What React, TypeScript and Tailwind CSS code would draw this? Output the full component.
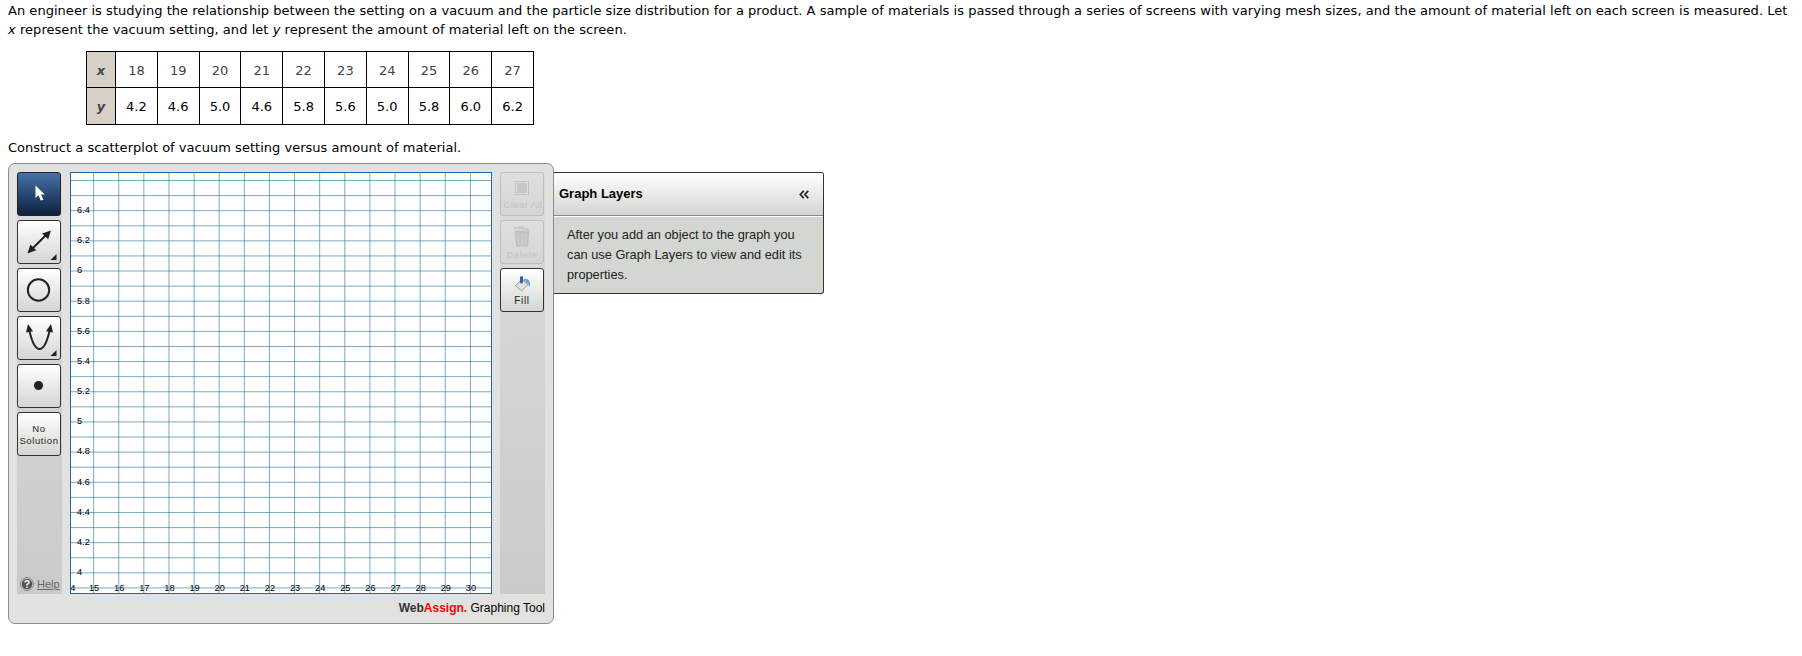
import type { ReactNode } from 'react';

const data = [
  [18, '4.2'], [19, '4.6'], [20, '5.0'], [21, '4.6'], [22, '5.8'],
  [23, '5.6'], [24, '5.0'], [25, '5.8'], [26, '6.0'], [27, '6.2'],
];

function Tool({ children, active, disabled }: { children: ReactNode; active?: boolean; disabled?: boolean }) {
  const look = active
    ? 'border-[#222] bg-linear-to-b from-[#4673a8] to-[#0e2240]'
    : disabled
      ? 'border-[#bebebe] bg-linear-to-b from-[#dfdfdf] to-[#d6d6d5]'
      : 'border-[#333] bg-linear-to-b from-white to-[#d4d6d1]';
  return (
    <button className={`flex h-11 w-11 shrink-0 flex-col items-center overflow-hidden rounded-[3px] border ${look}`}>
      {children}
    </button>
  );
}

function Graph() {
  const xs = Array.from({ length: 16 }, (_, i) => i);
  const ys = Array.from({ length: 28 }, (_, i) => i);
  return (
    <svg width="422" height="422" viewBox="0 0 422 422" className="shrink-0 bg-white">
      <g stroke="#1f7399" strokeOpacity="0.6" strokeWidth="1">
        {xs.map((i) => <line key={i} x1={23.6 + i * 25.12} x2={23.6 + i * 25.12} y1="0" y2="422" />)}
        {ys.map((i) => <line key={i} y1={8.5 + i * 15.09} y2={8.5 + i * 15.09} x1="0" x2="422" />)}
      </g>
      <g fontFamily="Liberation Sans, sans-serif" fontSize="9.2" fill="#000">
        {Array.from({ length: 13 }, (_, i) => (
          <text key={i} x="7" y={41 + i * 30.18}>{String((64 - i * 2) / 10)}</text>
        ))}
        <text x="0.2" y="419">4</text>
        {Array.from({ length: 16 }, (_, i) => (
          <text key={i} x={24.1 + i * 25.12} y="419" textAnchor="middle">{15 + i}</text>
        ))}
      </g>
      <rect x="0.5" y="0.5" width="421" height="421" fill="none" stroke="#2463a0" />
    </svg>
  );
}

export default function App() {
  return (
    <div className="h-[656px] w-[1802px] overflow-hidden bg-white pt-px pl-2 font-['DejaVu_Sans',Verdana,sans-serif] text-[13px] leading-[19px] text-black">
      <p className="whitespace-nowrap">
        <span className="tracking-[0.033px]">An engineer is studying the relationship between the setting on a vacuum and the particle size distribution for a product. A sample of materials is passed through a series of screens with varying mesh sizes, and the amount of material left on each screen is measured. Let</span>
        <br />
        <span className="tracking-[0.048px]"><i>x</i> represent the vacuum setting, and let <i>y</i> represent the amount of material left on the screen.</span>
      </p>
      <table className="mt-3 ml-[78px] h-[74px] w-[448px] table-fixed border-collapse text-center">
        <tbody>
          <tr className="h-[36px] text-[#444]">
            <th className="w-[29px] border border-black bg-[#d6d0c7] p-0 pt-px italic">x</th>
            {data.map(([x]) => <td key={x} className="border border-black p-0 pt-px">{x}</td>)}
          </tr>
          <tr className="h-[37px]">
            <th className="border border-black bg-[#d6d0c7] p-0 text-[#444] italic">y</th>
            {data.map(([x, y]) => <td key={x} className="border border-black p-0">{y}</td>)}
          </tr>
        </tbody>
      </table>
      <p className="mt-[13px] tracking-[0.02px] whitespace-nowrap">Construct a scatterplot of vacuum setting versus amount of material.</p>

      <div className="mt-[6px] flex items-start font-['Liberation_Sans',Arial,sans-serif]">
        <div className="h-[461px] w-[546px] rounded-[7px] border border-[#8c8c8c] bg-[#e1e1df] px-2 pt-2">
          <div className="flex h-[422px] gap-2">
            <div className="flex w-[45px] flex-col gap-1 bg-linear-to-b from-[#dcdcdc] to-[#cacaca]">
              <Tool active>
                <svg width="42" height="42" viewBox="0 0 42 42">
                  <path d="M17.500 12.500V25l3-2.700 2.400 5.400 2.500-1.100-2.400-5.200h3.800z" fill="#fff" />
                </svg>
              </Tool>
              <Tool>
                <svg width="42" height="42" viewBox="0 0 42 42" fill="#222">
                  <path d="M13 29 30 12" stroke="#222" strokeWidth="2" />
                  <path d="M33 9.500 24 12.500l6.200 5.800zM9.500 32.500l8.800-3.200-6-5.700zM38.500 33v6h-6z" />
                </svg>
              </Tool>
              <Tool>
                <svg width="42" height="42" viewBox="0 0 42 42">
                  <circle cx="20.500" cy="21" r="10.700" fill="none" stroke="#222" strokeWidth="2" />
                </svg>
              </Tool>
              <Tool>
                <svg width="42" height="42" viewBox="0 0 42 42" fill="#222">
                  <path d="M11.500 14c2.500 11 6 18 10 18s7.500-7 10-18" fill="none" stroke="#222" strokeWidth="2" />
                  <path d="m10 7-2 8.500 7-1.300zM33 7l-5 7.200 7 1.300zM38.500 33v6h-6z" />
                </svg>
              </Tool>
              <Tool>
                <svg width="42" height="42" viewBox="0 0 42 42"><circle cx="20.500" cy="20.500" r="4.500" fill="#222" /></svg>
              </Tool>
              <Tool>
                <span className="mt-[10px] text-[9.500px] leading-3 tracking-[0.6px] text-[#222]">No<br />Solution</span>
              </Tool>
              <div className="mt-auto mb-[3px] flex items-center gap-[3px] pl-[3px] text-[11px] leading-[14px]">
                <svg width="14" height="14" viewBox="0 0 14 14">
                  <circle cx="7" cy="7" r="6.500" fill="#ccc" stroke="#8a8a8a" />
                  <circle cx="7" cy="7" r="5.300" fill="#555" />
                  <path d="M5 5.500Q5 3.700 7 3.700t2 1.700Q9 6.500 7 7.400v1M7 9.500v1.400" fill="none" stroke="#fff" strokeWidth="1.400" />
                </svg>
                <span className="text-[#666] underline">Help</span>
              </div>
            </div>
            <Graph />
            <div className="flex w-[45px] flex-col gap-1 bg-linear-to-b from-[#dcdcdc] to-[#cacaca]">
              <Tool disabled>
                <svg width="42" height="26" viewBox="0 0 42 26" className="shrink-0">
                  <rect x="14.500" y="8.500" width="13" height="13" fill="#dedede" stroke="#c2c2c2" />
                  <rect x="16" y="10" width="10" height="10" fill="#c6c6c6" />
                </svg>
                <span className="pl-[2px] text-[9.500px] leading-3 tracking-[0.4px] whitespace-nowrap text-[#c2c2c2]">Clear All</span>
              </Tool>
              <Tool disabled>
                <svg width="42" height="28" viewBox="0 0 42 28" className="shrink-0" fill="none" stroke="#c2c2c2">
                  <path d="M12.500 6.500 28 8.500M18 5.500l5 .5" strokeWidth="1.500" />
                  <path d="M13.500 9.500h15L27 25.500H15z" fill="#c2c2c2" stroke="none" />
                  <path d="m17 12 1 12M21 12v12M25 12l-1 12" stroke="#d5d5d5" />
                </svg>
                <span className="text-[9.500px] leading-3 tracking-[0.6px] text-[#c2c2c2]">Delete</span>
              </Tool>
              <Tool>
                <svg width="42" height="26" viewBox="0 0 42 26" className="shrink-0">
                  <path d="m14.500 16.500 6.500-6 6 5-6.500 6.500z" fill="#e2e2e2" stroke="#999" />
                  <path d="M22 10.500c4-2 8 .5 7 7.500l-3-4z" fill="#6fa5d4" />
                  <path d="M20.500 8.500v4.500" stroke="#2b63b5" strokeWidth="3" strokeLinecap="round" />
                </svg>
                <span className="text-[10px] leading-3 tracking-[0.7px] text-[#222]">Fill</span>
              </Tool>
            </div>
          </div>
          <div className="mt-[6px] text-right text-[12px] leading-4">
            <b className="text-[#333]">Web</b><b className="text-[#f00]">Assign.</b> Graphing Tool
          </div>
        </div>
        <div className="mt-[9px] h-[122px] w-[270px] overflow-hidden rounded-r-[3px] border border-l-0 border-[#333] bg-[#d4d6d1]">
          <div className="flex h-[43px] items-center justify-between border-b border-[#888] bg-linear-to-b from-white to-[#d4d6d1] pr-[14px] pl-[5px]">
            <b className="pb-[2px] text-[13px]">Graph Layers</b>
            <svg width="10" height="9" viewBox="0 0 10 9" fill="none" stroke="#222" strokeWidth="1.700">
              <path d="M4.800.8 1.300 4.500l3.500 3.700M9.300.8 5.800 4.500l3.500 3.700" />
            </svg>
          </div>
          <p className="border-t border-white pt-2 pl-[13px] text-[12.800px] leading-5 whitespace-nowrap text-[#222]">
            After you add an object to the graph you<br />can use Graph Layers to view and edit its<br />properties.
          </p>
        </div>
      </div>
    </div>
  );
}
